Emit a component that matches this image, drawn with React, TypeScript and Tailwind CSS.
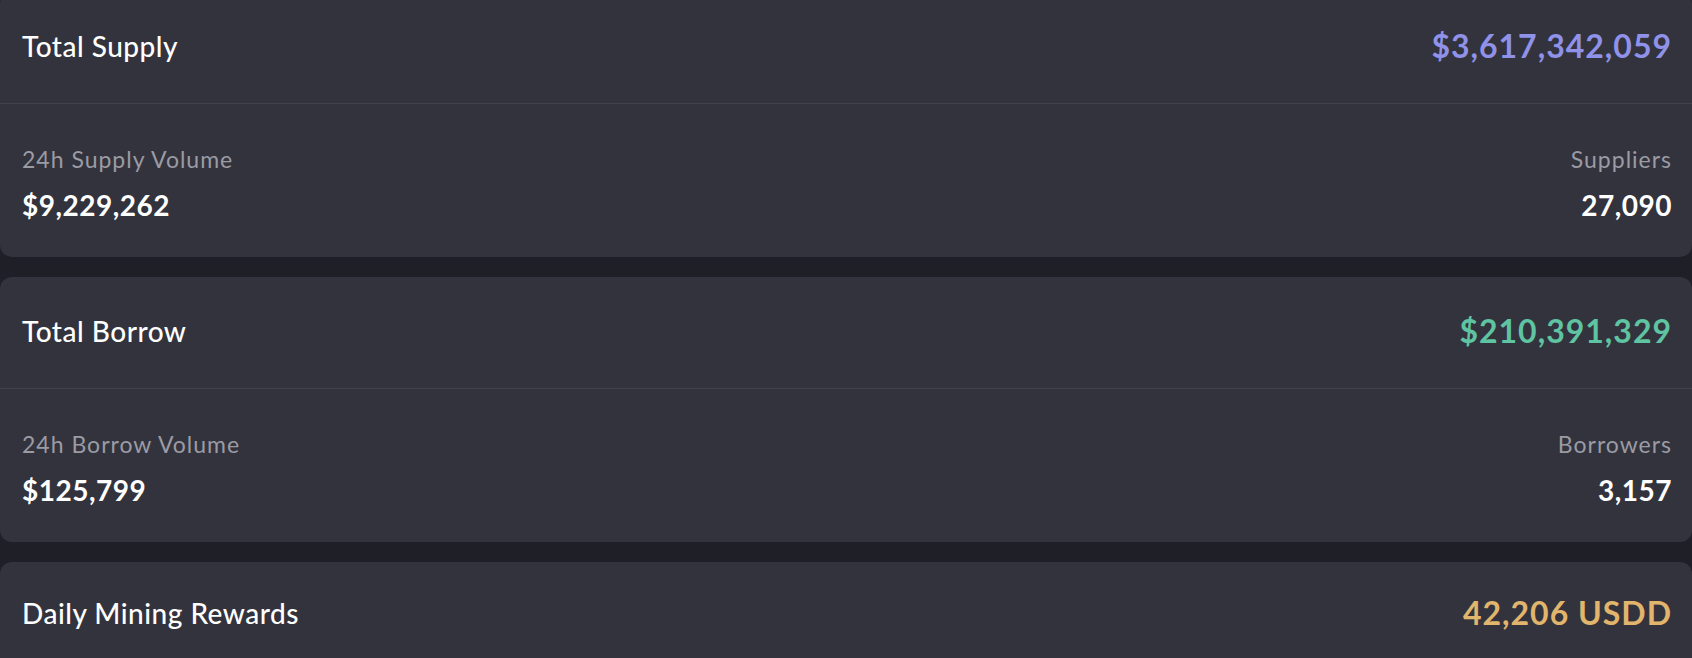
import React from 'react'

interface StatCard {
  title: string
  total: string
  totalColor: string
  volumeLabel?: string
  volume?: string
  countLabel?: string
  count?: string
}

const cards: StatCard[] = [
  {
    title: 'Total Supply',
    total: '$3,617,342,059',
    totalColor: 'text-[#8f92e8]',
    volumeLabel: '24h Supply Volume',
    volume: '$9,229,262',
    countLabel: 'Suppliers',
    count: '27,090',
  },
  {
    title: 'Total Borrow',
    total: '$210,391,329',
    totalColor: 'text-[#5ec4a2]',
    volumeLabel: '24h Borrow Volume',
    volume: '$125,799',
    countLabel: 'Borrowers',
    count: '3,157',
  },
  {
    title: 'Daily Mining Rewards',
    total: '42,206 USDD',
    totalColor: 'text-[#e1b56c]',
  },
]

function Card({ card }: { card: StatCard }) {
  return (
    <div className="rounded-[12px] bg-[#33333d]">
      <div
        className={`flex h-[111px] items-center justify-between pl-[22px] pr-[20px] ${
          card.volumeLabel ? 'pb-[4px]' : 'pb-[10px]'
        }`}
      >
        <span className="text-[28px] font-medium tracking-[0.5px] text-white">{card.title}</span>
        <span className={`text-[32px] font-bold tracking-[1px] ${card.totalColor}`}>{card.total}</span>
      </div>

      {card.volumeLabel && (
        <div className="flex items-start justify-between border-t border-[#42424c] pl-[22px] pr-[20px] pt-[41px] pb-[35px]">
          <div className="flex flex-col">
            <span className="text-[23px] leading-[28px] tracking-[1px] text-[#9b9ba4]">
              {card.volumeLabel}
            </span>
            <span className="mt-[15px] text-[28px] leading-[34px] font-bold tracking-[0.5px] text-white">
              {card.volume}
            </span>
          </div>
          <div className="flex flex-col items-end">
            <span className="text-[23px] leading-[28px] tracking-[1px] text-[#9b9ba4]">
              {card.countLabel}
            </span>
            <span className="mt-[15px] text-[28px] leading-[34px] font-bold tracking-[0.5px] text-white">
              {card.count}
            </span>
          </div>
        </div>
      )}
    </div>
  )
}

export default function App() {
  return (
    <div
      className="h-[658px] overflow-hidden bg-[#1f1f27]"
      style={{ fontFamily: 'Lato, "Noto Sans", sans-serif' }}
    >
      <div className="-mt-[8px] flex flex-col gap-[20px]">
        {cards.map((card) => (
          <Card key={card.title} card={card} />
        ))}
      </div>
    </div>
  )
}
